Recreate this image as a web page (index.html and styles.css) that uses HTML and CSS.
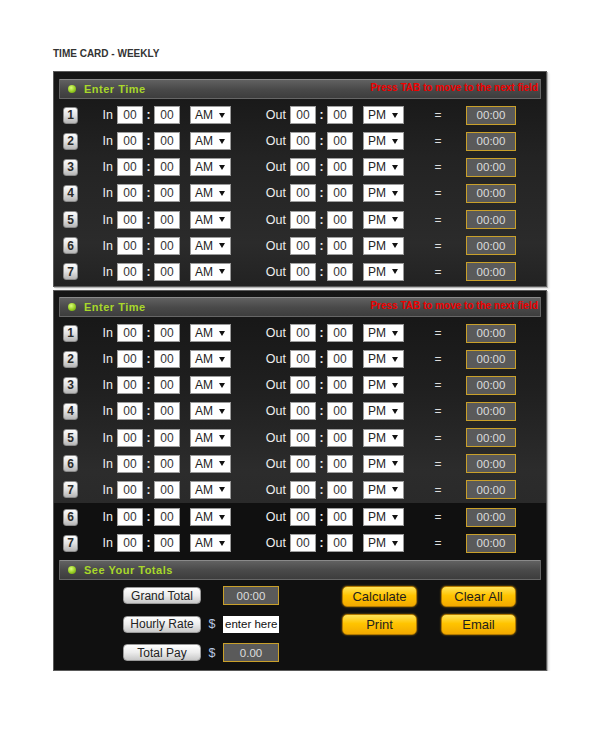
FILE: index.html
```html
<!DOCTYPE html>
<html>
<head>
<meta charset="utf-8">
<link rel="stylesheet" href="styles.css">
</head>
<body>
<div class="page">
  <div class="title">TIME CARD - WEEKLY</div>

  <div class="panel panel1">
    <div class="bar"><span class="dot"></span><span class="bar-title">Enter Time</span><span class="hint">Press TAB to move to the next field</span></div>
    <div class="rows rows1">
      <div class="row"><span class="badge">1</span><span class="lbl lbl-in">In</span><span class="box">00</span><span class="colon">:</span><span class="box">00</span><span class="sel">AM<i class="caret"></i></span><span class="lbl lbl-out">Out</span><span class="box">00</span><span class="colon">:</span><span class="box">00</span><span class="sel">PM<i class="caret"></i></span><span class="eq">=</span><span class="result">00:00</span></div>
      <div class="row"><span class="badge">2</span><span class="lbl lbl-in">In</span><span class="box">00</span><span class="colon">:</span><span class="box">00</span><span class="sel">AM<i class="caret"></i></span><span class="lbl lbl-out">Out</span><span class="box">00</span><span class="colon">:</span><span class="box">00</span><span class="sel">PM<i class="caret"></i></span><span class="eq">=</span><span class="result">00:00</span></div>
      <div class="row"><span class="badge">3</span><span class="lbl lbl-in">In</span><span class="box">00</span><span class="colon">:</span><span class="box">00</span><span class="sel">AM<i class="caret"></i></span><span class="lbl lbl-out">Out</span><span class="box">00</span><span class="colon">:</span><span class="box">00</span><span class="sel">PM<i class="caret"></i></span><span class="eq">=</span><span class="result">00:00</span></div>
      <div class="row"><span class="badge">4</span><span class="lbl lbl-in">In</span><span class="box">00</span><span class="colon">:</span><span class="box">00</span><span class="sel">AM<i class="caret"></i></span><span class="lbl lbl-out">Out</span><span class="box">00</span><span class="colon">:</span><span class="box">00</span><span class="sel">PM<i class="caret"></i></span><span class="eq">=</span><span class="result">00:00</span></div>
      <div class="row"><span class="badge">5</span><span class="lbl lbl-in">In</span><span class="box">00</span><span class="colon">:</span><span class="box">00</span><span class="sel">AM<i class="caret"></i></span><span class="lbl lbl-out">Out</span><span class="box">00</span><span class="colon">:</span><span class="box">00</span><span class="sel">PM<i class="caret"></i></span><span class="eq">=</span><span class="result">00:00</span></div>
      <div class="row"><span class="badge">6</span><span class="lbl lbl-in">In</span><span class="box">00</span><span class="colon">:</span><span class="box">00</span><span class="sel">AM<i class="caret"></i></span><span class="lbl lbl-out">Out</span><span class="box">00</span><span class="colon">:</span><span class="box">00</span><span class="sel">PM<i class="caret"></i></span><span class="eq">=</span><span class="result">00:00</span></div>
      <div class="row"><span class="badge">7</span><span class="lbl lbl-in">In</span><span class="box">00</span><span class="colon">:</span><span class="box">00</span><span class="sel">AM<i class="caret"></i></span><span class="lbl lbl-out">Out</span><span class="box">00</span><span class="colon">:</span><span class="box">00</span><span class="sel">PM<i class="caret"></i></span><span class="eq">=</span><span class="result">00:00</span></div>
    </div>
  </div>

  <div class="panel panel2">
    <div class="sect-a">
      <div class="bar"><span class="dot"></span><span class="bar-title">Enter Time</span><span class="hint">Press TAB to move to the next field</span></div>
      <div class="rows rows2">
        <div class="row"><span class="badge">1</span><span class="lbl lbl-in">In</span><span class="box">00</span><span class="colon">:</span><span class="box">00</span><span class="sel">AM<i class="caret"></i></span><span class="lbl lbl-out">Out</span><span class="box">00</span><span class="colon">:</span><span class="box">00</span><span class="sel">PM<i class="caret"></i></span><span class="eq">=</span><span class="result">00:00</span></div>
        <div class="row"><span class="badge">2</span><span class="lbl lbl-in">In</span><span class="box">00</span><span class="colon">:</span><span class="box">00</span><span class="sel">AM<i class="caret"></i></span><span class="lbl lbl-out">Out</span><span class="box">00</span><span class="colon">:</span><span class="box">00</span><span class="sel">PM<i class="caret"></i></span><span class="eq">=</span><span class="result">00:00</span></div>
        <div class="row"><span class="badge">3</span><span class="lbl lbl-in">In</span><span class="box">00</span><span class="colon">:</span><span class="box">00</span><span class="sel">AM<i class="caret"></i></span><span class="lbl lbl-out">Out</span><span class="box">00</span><span class="colon">:</span><span class="box">00</span><span class="sel">PM<i class="caret"></i></span><span class="eq">=</span><span class="result">00:00</span></div>
        <div class="row"><span class="badge">4</span><span class="lbl lbl-in">In</span><span class="box">00</span><span class="colon">:</span><span class="box">00</span><span class="sel">AM<i class="caret"></i></span><span class="lbl lbl-out">Out</span><span class="box">00</span><span class="colon">:</span><span class="box">00</span><span class="sel">PM<i class="caret"></i></span><span class="eq">=</span><span class="result">00:00</span></div>
        <div class="row"><span class="badge">5</span><span class="lbl lbl-in">In</span><span class="box">00</span><span class="colon">:</span><span class="box">00</span><span class="sel">AM<i class="caret"></i></span><span class="lbl lbl-out">Out</span><span class="box">00</span><span class="colon">:</span><span class="box">00</span><span class="sel">PM<i class="caret"></i></span><span class="eq">=</span><span class="result">00:00</span></div>
        <div class="row"><span class="badge">6</span><span class="lbl lbl-in">In</span><span class="box">00</span><span class="colon">:</span><span class="box">00</span><span class="sel">AM<i class="caret"></i></span><span class="lbl lbl-out">Out</span><span class="box">00</span><span class="colon">:</span><span class="box">00</span><span class="sel">PM<i class="caret"></i></span><span class="eq">=</span><span class="result">00:00</span></div>
        <div class="row"><span class="badge">7</span><span class="lbl lbl-in">In</span><span class="box">00</span><span class="colon">:</span><span class="box">00</span><span class="sel">AM<i class="caret"></i></span><span class="lbl lbl-out">Out</span><span class="box">00</span><span class="colon">:</span><span class="box">00</span><span class="sel">PM<i class="caret"></i></span><span class="eq">=</span><span class="result">00:00</span></div>
      </div>
    </div>
    <div class="sect-b">
      <div class="rows rows3">
        <div class="row"><span class="badge">6</span><span class="lbl lbl-in">In</span><span class="box">00</span><span class="colon">:</span><span class="box">00</span><span class="sel">AM<i class="caret"></i></span><span class="lbl lbl-out">Out</span><span class="box">00</span><span class="colon">:</span><span class="box">00</span><span class="sel">PM<i class="caret"></i></span><span class="eq">=</span><span class="result">00:00</span></div>
        <div class="row"><span class="badge">7</span><span class="lbl lbl-in">In</span><span class="box">00</span><span class="colon">:</span><span class="box">00</span><span class="sel">AM<i class="caret"></i></span><span class="lbl lbl-out">Out</span><span class="box">00</span><span class="colon">:</span><span class="box">00</span><span class="sel">PM<i class="caret"></i></span><span class="eq">=</span><span class="result">00:00</span></div>
      </div>
      <div class="bar bar-totals"><span class="dot"></span><span class="bar-title">See Your Totals</span></div>
      <div class="totals">
        <div class="tgrid">
          <span class="tbtn">Grand Total</span><span class="dollar"></span><span class="tout">00:00</span>
          <span class="tbtn">Hourly Rate</span><span class="dollar">$</span><span class="tin">enter here</span>
          <span class="tbtn">Total Pay</span><span class="dollar">$</span><span class="tout">0.00</span>
        </div>
        <div class="ygrid">
          <span class="ybtn">Calculate</span><span class="ybtn">Clear All</span>
          <span class="ybtn">Print</span><span class="ybtn">Email</span>
        </div>
      </div>
    </div>
  </div>
</div>
</body>
</html>
```

FILE: styles.css
```css
body {
  margin: 0;
  background: #ffffff;
  font-family: "Liberation Sans", Arial, sans-serif;
}

.page {
  padding: 48px 0 0 53px;
}

.title {
  font-size: 10px;
  font-weight: bold;
  line-height: 12px;
  color: #333333;
  margin-bottom: 11px;
}

.panel {
  width: 492px;
  border: 1px solid #5a5a5a;
  box-shadow: 1px 1px 0 #b5b5b5, 2px 2px 2px rgba(0, 0, 0, 0.12);
}

.panel1 {
  padding: 7px 0 1px;
  background: linear-gradient(#151515, #232323 40%, #2b2b2b 80%, #222222);
}

.panel2 {
  margin-top: 3px;
  background: #0f0f0f;
}

.sect-a {
  padding-top: 6px;
  background: linear-gradient(#151515, #1f1f1f 45%, #2c2c2c 85%, #2a2a2a);
}

.sect-b {
  background: #101010;
}

.bar {
  margin: 0 5px;
  height: 18px;
  border: 1px solid #666666;
  border-top-color: #8a8a8a;
  border-radius: 1px;
  background: linear-gradient(#616161, #4a4a4a 50%, #3d3d3d);
  display: flex;
  align-items: center;
}

.bar-totals {
  margin-top: 4px;
}

.dot {
  width: 8px;
  height: 8px;
  border-radius: 50%;
  margin-left: 8px;
  background: radial-gradient(circle at 40% 35%, #dcff7a, #96cc22 55%, #5e8c10);
}

.bar-title {
  margin-left: 8px;
  font-size: 11px;
  font-weight: bold;
  letter-spacing: 0.5px;
  color: #a8d82a;
}

.hint {
  margin-left: auto;
  margin-right: 2px;
  margin-bottom: 3px;
  font-size: 10px;
  font-weight: bold;
  color: #ee0000;
}

.rows1 {
  margin-top: 3px;
}

.rows2 {
  margin-top: 3px;
}

.rows3 {
  padding-top: 1px;
}

.row {
  height: 26.15px;
  display: flex;
  align-items: center;
}

.badge {
  width: 15px;
  height: 17px;
  margin-left: 9px;
  box-sizing: border-box;
  border-radius: 3px;
  border: 1px solid #8a8a8a;
  background: linear-gradient(#fdfdfd, #e2e2e2 50%, #b6b6b6);
  color: #2a2a2a;
  font-size: 12px;
  font-weight: bold;
  display: flex;
  align-items: center;
  justify-content: center;
}

.lbl {
  color: #eeeeee;
  font-size: 12.5px;
  text-align: right;
  padding-right: 4px;
}

.lbl-in {
  width: 35px;
}

.lbl-out {
  width: 55px;
}

.box {
  width: 26px;
  height: 18px;
  box-sizing: border-box;
  background: #ffffff;
  border: 1px solid #a0a0a0;
  color: #333333;
  font-size: 12px;
  display: flex;
  align-items: center;
  justify-content: center;
}

.colon {
  width: 11px;
  text-align: center;
  color: #eeeeee;
  font-size: 12px;
  font-weight: bold;
}

.sel {
  margin-left: 10px;
  width: 41px;
  height: 18px;
  box-sizing: border-box;
  background: #ffffff;
  border: 1px solid #9a9a9a;
  padding-left: 4px;
  color: #222222;
  font-size: 12px;
  display: flex;
  align-items: center;
}

.caret {
  margin-left: auto;
  margin-right: 5px;
  width: 0;
  height: 0;
  border-left: 3px solid transparent;
  border-right: 3px solid transparent;
  border-top: 5px solid #111111;
}

.eq {
  margin-left: 27px;
  width: 14px;
  text-align: center;
  color: #dddddd;
  font-size: 12px;
}

.result {
  margin-left: 21px;
  width: 50px;
  height: 19px;
  box-sizing: border-box;
  border: 1px solid #c9a02a;
  background: #5a5a5a;
  color: #dddddd;
  font-size: 11.5px;
  display: flex;
  align-items: center;
  justify-content: center;
}

.totals {
  display: flex;
  padding: 6px 0 8px 69px;
}

.tgrid {
  display: grid;
  grid-template-columns: 78px 22px 56px;
  grid-template-rows: 19px 19px 19px;
  row-gap: 9.5px;
  align-items: center;
}

.tbtn {
  height: 17px;
  box-sizing: border-box;
  border: 1px solid #9a9a9a;
  border-radius: 4px;
  background: linear-gradient(#ffffff, #ececec 50%, #c8c8c8);
  color: #222222;
  font-size: 12px;
  white-space: nowrap;
  display: flex;
  align-items: center;
  justify-content: center;
}

.dollar {
  text-align: center;
  color: #b9c9e2;
  font-size: 12.5px;
}

.tout {
  height: 19px;
  box-sizing: border-box;
  border: 1px solid #c9a02a;
  background: #5a5a5a;
  color: #dddddd;
  font-size: 11.5px;
  display: flex;
  align-items: center;
  justify-content: center;
}

.tin {
  height: 17px;
  box-sizing: border-box;
  background: #ffffff;
  color: #111111;
  font-size: 11.5px;
  white-space: nowrap;
  overflow: hidden;
  padding-left: 2px;
  display: flex;
  align-items: center;
}

.ygrid {
  margin-left: 63px;
  display: grid;
  grid-template-columns: 75px 75px;
  grid-template-rows: 21px 21px;
  column-gap: 24px;
  row-gap: 7px;
}

.ybtn {
  box-sizing: border-box;
  border: 1px solid #b37a00;
  border-radius: 5px;
  background: linear-gradient(#ffe45a, #ffc400 45%, #f2a900);
  box-shadow: 0 0 2px rgba(255, 190, 0, 0.6);
  color: #1e1e1e;
  font-size: 13px;
  white-space: nowrap;
  display: flex;
  align-items: center;
  justify-content: center;
}
```
